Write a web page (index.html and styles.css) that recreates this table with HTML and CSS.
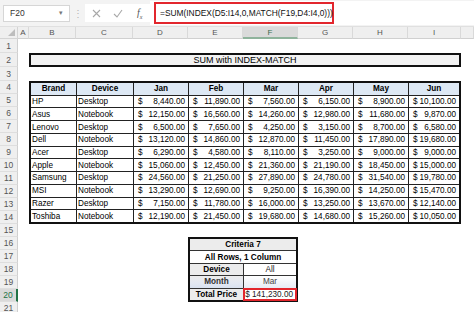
FILE: index.html
```html
<!DOCTYPE html>
<html>
<head>
<meta charset="utf-8">
<link rel="stylesheet" href="styles.css">
</head>
<body>
<div class="topbar">
  <div class="namebox"><span>F20</span><span class="arrow">&#9662;</span></div>
  <div class="dots">&#8942;</div>
  <div class="btns">
    <svg class="ic" width="9" height="9" viewBox="0 0 9 9"><path d="M1 1 L8 8 M8 1 L1 8" stroke="#a8a8a8" stroke-width="1.1" fill="none"/></svg>
    <svg class="ic" width="10" height="9" viewBox="0 0 10 9"><path d="M1 5 L4 8 L9 1" stroke="#a8a8a8" stroke-width="1.1" fill="none"/></svg>
    <span class="fx">f<sub>x</sub></span>
  </div>
  <div class="formula">
    <div class="fbox">=SUM(INDEX(D5:I14,0,MATCH(F19,D4:I4,0)))</div>
  </div>
</div>
<div class="sheet">
  <div class="corner"><svg width="7" height="7" viewBox="0 0 7 7"><path d="M7 0 L7 7 L0 7 Z" fill="#bdbdbd"/></svg></div>
  <div class="colheads">
    <div class="ch">A</div><div class="ch">B</div><div class="ch">C</div><div class="ch">D</div><div class="ch">E</div><div class="ch sel">F</div><div class="ch">G</div><div class="ch">H</div><div class="ch">I</div><div class="ch"></div>
  </div>
  <div class="rowheads">
    <div class="rh">1</div><div class="rh">2</div><div class="rh">3</div><div class="rh">4</div><div class="rh">5</div><div class="rh">6</div><div class="rh">7</div><div class="rh">8</div><div class="rh">9</div><div class="rh">10</div><div class="rh">11</div><div class="rh">12</div><div class="rh">13</div><div class="rh">14</div><div class="rh">15</div><div class="rh">16</div><div class="rh">17</div><div class="rh">18</div><div class="rh">19</div><div class="rh sel">20</div><div class="rh">21</div>
  </div>
  <div class="cells">
    <div class="title">SUM with INDEX-MATCH</div>
    <div class="data">
      <div class="hd">Brand</div><div class="hd">Device</div><div class="hd">Jan</div><div class="hd">Feb</div><div class="hd">Mar</div><div class="hd">Apr</div><div class="hd">May</div><div class="hd">Jun</div>

      <div class="tx">HP</div><div class="tx">Desktop</div><div class="m"><span>$</span><span>8,440.00</span></div><div class="m"><span>$</span><span>11,890.00</span></div><div class="m"><span>$</span><span>7,560.00</span></div><div class="m"><span>$</span><span>6,150.00</span></div><div class="m"><span>$</span><span>8,900.00</span></div><div class="m"><span>$</span><span>10,100.00</span></div>

      <div class="tx">Asus</div><div class="tx">Notebook</div><div class="m"><span>$</span><span>12,150.00</span></div><div class="m"><span>$</span><span>16,560.00</span></div><div class="m"><span>$</span><span>14,260.00</span></div><div class="m"><span>$</span><span>12,980.00</span></div><div class="m"><span>$</span><span>11,680.00</span></div><div class="m"><span>$</span><span>9,870.00</span></div>

      <div class="tx">Lenovo</div><div class="tx">Desktop</div><div class="m"><span>$</span><span>6,500.00</span></div><div class="m"><span>$</span><span>7,650.00</span></div><div class="m"><span>$</span><span>4,250.00</span></div><div class="m"><span>$</span><span>3,150.00</span></div><div class="m"><span>$</span><span>8,700.00</span></div><div class="m"><span>$</span><span>6,580.00</span></div>

      <div class="tx">Dell</div><div class="tx">Notebook</div><div class="m"><span>$</span><span>13,120.00</span></div><div class="m"><span>$</span><span>14,860.00</span></div><div class="m"><span>$</span><span>12,870.00</span></div><div class="m"><span>$</span><span>11,450.00</span></div><div class="m"><span>$</span><span>17,890.00</span></div><div class="m"><span>$</span><span>19,680.00</span></div>

      <div class="tx">Acer</div><div class="tx">Desktop</div><div class="m"><span>$</span><span>6,290.00</span></div><div class="m"><span>$</span><span>4,580.00</span></div><div class="m"><span>$</span><span>8,110.00</span></div><div class="m"><span>$</span><span>3,250.00</span></div><div class="m"><span>$</span><span>9,000.00</span></div><div class="m"><span>$</span><span>9,000.00</span></div>

      <div class="tx">Apple</div><div class="tx">Notebook</div><div class="m"><span>$</span><span>15,060.00</span></div><div class="m"><span>$</span><span>12,450.00</span></div><div class="m"><span>$</span><span>21,360.00</span></div><div class="m"><span>$</span><span>21,190.00</span></div><div class="m"><span>$</span><span>18,450.00</span></div><div class="m"><span>$</span><span>15,000.00</span></div>

      <div class="tx">Samsung</div><div class="tx">Desktop</div><div class="m"><span>$</span><span>24,560.00</span></div><div class="m"><span>$</span><span>21,250.00</span></div><div class="m"><span>$</span><span>27,890.00</span></div><div class="m"><span>$</span><span>24,780.00</span></div><div class="m"><span>$</span><span>31,540.00</span></div><div class="m"><span>$</span><span>19,780.00</span></div>

      <div class="tx">MSI</div><div class="tx">Notebook</div><div class="m"><span>$</span><span>13,290.00</span></div><div class="m"><span>$</span><span>12,690.00</span></div><div class="m"><span>$</span><span>9,250.00</span></div><div class="m"><span>$</span><span>16,390.00</span></div><div class="m"><span>$</span><span>14,250.00</span></div><div class="m"><span>$</span><span>15,470.00</span></div>

      <div class="tx">Razer</div><div class="tx">Desktop</div><div class="m"><span>$</span><span>7,150.00</span></div><div class="m"><span>$</span><span>11,780.00</span></div><div class="m"><span>$</span><span>16,000.00</span></div><div class="m"><span>$</span><span>13,250.00</span></div><div class="m"><span>$</span><span>13,670.00</span></div><div class="m"><span>$</span><span>12,140.00</span></div>

      <div class="tx">Toshiba</div><div class="tx">Notebook</div><div class="m"><span>$</span><span>12,190.00</span></div><div class="m"><span>$</span><span>21,450.00</span></div><div class="m"><span>$</span><span>19,680.00</span></div><div class="m"><span>$</span><span>14,680.00</span></div><div class="m"><span>$</span><span>15,260.00</span></div><div class="m"><span>$</span><span>10,050.00</span></div>
    </div>
    <div class="crit">
      <div class="c-title">Criteria 7</div>
      <div class="c-sub">All Rows, 1 Column</div>
      <div class="c-lab">Device</div><div class="c-val">All</div>
      <div class="c-lab wmrow">Month</div><div class="c-val wmrow2">Mar</div>
      <div class="c-lab">Total Price</div><div class="c-val total">$ 141,230.00</div>
    </div>
  </div>
</div>
</body>
</html>
```
FILE: styles.css
```css
html, body {
  margin: 0;
  padding: 0;
}
body {
  width: 474px;
  height: 312px;
  overflow: hidden;
  background: #ffffff;
  font-family: "Liberation Sans", Arial, sans-serif;
  color: #111;
}

/* ---------- formula bar ---------- */
.topbar {
  height: 27px;
  display: flex;
  align-items: center;
  background: #f3f3f3;
  box-sizing: border-box;
  border-bottom: 1px solid #e0e0e0;
}
.namebox {
  margin-left: 3px;
  width: 67px;
  height: 17px;
  box-sizing: border-box;
  background: #fff;
  border: 1px solid #d6d6d6;
  display: flex;
  align-items: center;
  justify-content: space-between;
  padding: 0 6px 0 6px;
  font-size: 8.5px;
  color: #333;
}
.namebox .arrow {
  font-size: 7px;
  color: #777;
}
.dots {
  width: 15px;
  text-align: center;
  color: #b5b5b5;
  font-size: 10px;
}
.btns {
  width: 65px;
  height: 18px;
  background: #fff;
  display: flex;
  align-items: center;
  gap: 12px;
  padding-left: 7px;
  box-sizing: border-box;
}
.fx {
  font-family: "Liberation Serif", serif;
  font-style: italic;
  font-size: 10px;
  color: #555;
  margin-left: 2px;
}
.fx sub {
  font-size: 6px;
}
.formula {
  flex: 1;
  height: 24px;
  background: #fff;
  display: flex;
  align-items: flex-start;
  padding-left: 4px;
}
.fbox {
  width: 180px;
  height: 22px;
  margin-top: 1px;
  box-sizing: border-box;
  border: 2px solid #e2262d;
  font-size: 8.4px;
  color: #111;
  display: flex;
  align-items: center;
  padding-left: 4px;
}

/* ---------- sheet ---------- */
.sheet {
  display: grid;
  grid-template-columns: 18px 1fr;
  grid-template-rows: 12px 1fr;
}
.corner {
  background: #efefef;
  border-right: 1px solid #d4d4d4;
  border-bottom: 1px solid #d4d4d4;
  box-sizing: border-box;
  display: flex;
  align-items: flex-end;
  justify-content: flex-end;
  padding: 0 2px 2px 0;
}
.colheads {
  display: grid;
  grid-template-columns: 11px 47px 57px 55px 55px 55px 55px 55px 53px 1fr;
  background: #efefef;
}
.ch {
  font-size: 8px;
  color: #555;
  display: flex;
  align-items: center;
  justify-content: center;
  border-right: 1px solid #d9d9d9;
  border-bottom: 1px solid #d0d0d0;
  box-sizing: border-box;
}
.ch.sel {
  background: #dadada;
  color: #3b6e4f;
  border-bottom: 2px solid #8fb39c;
}
.rowheads {
  display: grid;
  grid-template-rows: 14px 14px 14px repeat(18, 13px);
  background: #efefef;
}
.rh {
  font-size: 8.5px;
  color: #555;
  display: flex;
  align-items: center;
  justify-content: center;
  border-right: 1px solid #d0d0d0;
  border-bottom: 1px solid #dedede;
  box-sizing: border-box;
}
.rh.sel {
  background: #dadada;
  color: #217346;
  border-right: 2px solid #217346;
}
.cells {
  display: grid;
  grid-template-columns: 11px 47px 57px 55px 55px 55px 55px 55px 53px 1fr;
  grid-template-rows: 14px 14px 14px repeat(18, 13px);
}

.title {
  grid-column: 2 / 10;
  grid-row: 2;
  border: 2px solid #111;
  background: #f2f2f2;
  box-sizing: border-box;
  font-size: 9px;
  color: #000;
  display: flex;
  align-items: center;
  justify-content: center;
}

.data {
  grid-column: 2 / 10;
  grid-row: 4 / 15;
  display: grid;
  grid-template-columns: 45px 56px 54px 54px 54px 54px 54px 50px;
  grid-template-rows: repeat(11, 1fr);
  gap: 1px;
  background: #222;
  border: 2px solid #111;
  box-sizing: border-box;
}
.data > div {
  background: #fff;
  font-size: 8.2px;
  color: #000;
  display: flex;
  align-items: center;
  white-space: nowrap;
}
.data .hd {
  background: #dde8f4;
  font-weight: bold;
  justify-content: center;
}
.data .tx {
  padding-left: 1px;
}
.data .m {
  justify-content: space-between;
  padding: 0 3px 0 4px;
}

.crit {
  grid-column: 5 / 7;
  grid-row: 16 / 21;
  display: grid;
  grid-template-columns: 53px 52px;
  grid-template-rows: repeat(5, 1fr);
  gap: 1px;
  background: #333;
  border: 2px solid #111;
  box-sizing: border-box;
}
.crit > div {
  font-size: 8.2px;
  color: #000;
  display: flex;
  align-items: center;
  justify-content: center;
  white-space: nowrap;
  background: #fff;
}
.crit .c-title {
  grid-column: 1 / 3;
  background: #ececec;
  font-weight: bold;
}
.crit .c-sub {
  grid-column: 1 / 3;
  font-weight: bold;
}
.crit .c-lab {
  background: #ececec;
  font-weight: bold;
}
.crit .c-val {
  color: #222;
}
.crit .wmrow {
  background: linear-gradient(180deg, #ececec 0%, #e3e8f2 60%, #d9e2f0 100%);
  color: #333;
}
.crit .wmrow2 {
  background: linear-gradient(180deg, #ffffff 0%, #eef2f8 70%, #e6ecf5 100%);
  color: #444;
}
.crit .total {
  outline: 2px solid #e2262d;
  outline-offset: -1px;
  justify-content: flex-end;
  padding-right: 3px;
  position: relative;
  z-index: 1;
}
```
